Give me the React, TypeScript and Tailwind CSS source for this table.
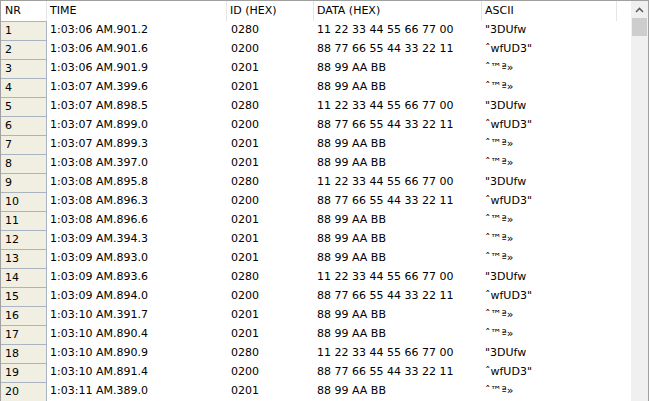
const A = { id: '0280', data: '11 22 33 44 55 66 77 00', ascii: '"3DUfw' }
const B = { id: '0200', data: '88 77 66 55 44 33 22 11', ascii: 'ˆwfUD3"' }
const C = { id: '0201', data: '88 99 AA BB', ascii: 'ˆ™ª»' }

const rows: [string, typeof A][] = [
  ['1:03:06 AM.901.2', A],
  ['1:03:06 AM.901.6', B],
  ['1:03:06 AM.901.9', C],
  ['1:03:07 AM.399.6', C],
  ['1:03:07 AM.898.5', A],
  ['1:03:07 AM.899.0', B],
  ['1:03:07 AM.899.3', C],
  ['1:03:08 AM.397.0', C],
  ['1:03:08 AM.895.8', A],
  ['1:03:08 AM.896.3', B],
  ['1:03:08 AM.896.6', C],
  ['1:03:09 AM.394.3', C],
  ['1:03:09 AM.893.0', C],
  ['1:03:09 AM.893.6', A],
  ['1:03:09 AM.894.0', B],
  ['1:03:10 AM.391.7', C],
  ['1:03:10 AM.890.4', C],
  ['1:03:10 AM.890.9', A],
  ['1:03:10 AM.891.4', B],
  ['1:03:11 AM.389.0', C],
]

function HeaderCell({ label, w }: { label: string; w: string }) {
  return (
    <div className={`${w} h-full flex items-center pl-[3px] border-r border-[#e5e5e5] shrink-0`}>
      {label}
    </div>
  )
}

export default function App() {
  return (
    <div
      className="w-[649px] h-[401px] bg-white border-t border-l border-r border-[#a0a0a0] flex overflow-hidden text-black text-[11px]"
      style={{ fontFamily: '"DejaVu Sans", Verdana, sans-serif' }}
    >
      {/* List */}
      <div className="flex-1 min-w-0 flex flex-col">
        <div className="h-[20px] flex items-center shrink-0">
          <div className="w-[46px] h-full flex items-center pl-[4px] border-r border-[#e5e5e5] shrink-0">NR</div>
          <HeaderCell label="TIME" w="w-[180px]" />
          <HeaderCell label="ID (HEX)" w="w-[87px]" />
          <HeaderCell label="DATA (HEX)" w="w-[168px]" />
          <HeaderCell label="ASCII" w="w-[135px]" />
        </div>

        {rows.map(([time, r], i) => (
          <div key={i} className="h-[19px] flex items-center shrink-0">
            <div className="w-[46px] h-full flex items-center pl-[4px] bg-[#f1efe2] border-t border-r border-[#a9b3c1] shrink-0">
              {i + 1}
            </div>
            <div className="w-[180px] pl-[3px] shrink-0">{time}</div>
            <div className="w-[87px] pl-[4px] shrink-0">{r.id}</div>
            <div className="w-[168px] pl-[3px] shrink-0">{r.data}</div>
            <div className="pl-[3px] whitespace-pre">{r.ascii}</div>
          </div>
        ))}
      </div>

      {/* Vertical scrollbar */}
      <div className="w-[17px] h-full bg-[#f0f0f0] flex flex-col shrink-0">
        <div className="h-[17px] flex items-center justify-center">
          <svg width="9" height="6" viewBox="0 0 9 6">
            <path d="M1 5 L4.5 1.5 L8 5" fill="none" stroke="#606060" strokeWidth="1.6" />
          </svg>
        </div>
        <div className="h-[18px] mx-[1px] bg-[#cdcdcd]" />
      </div>
    </div>
  )
}
